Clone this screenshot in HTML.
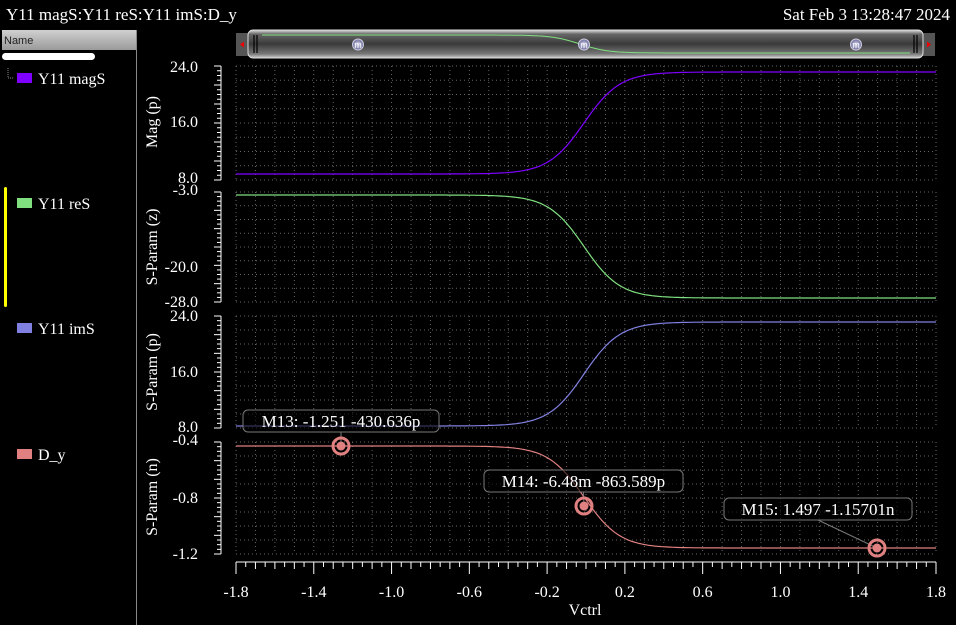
<!DOCTYPE html>
<html><head><meta charset="utf-8"><style>
html,body{margin:0;padding:0;background:#000;width:956px;height:625px;overflow:hidden;font-family:"Liberation Serif",serif;color:#fff}
svg text{font-family:"Liberation Serif",serif}
</style></head><body>
<svg id="s" width="956" height="625" xmlns="http://www.w3.org/2000/svg">
<defs>
<linearGradient id="hd" x1="0" y1="0" x2="0" y2="1"><stop offset="0" stop-color="#d0d0d0"/><stop offset="1" stop-color="#9a9a9a"/></linearGradient>
<linearGradient id="sb" x1="0" y1="0" x2="0" y2="1"><stop offset="0" stop-color="#ddd"/><stop offset="0.15" stop-color="#666"/><stop offset="0.5" stop-color="#3a3a3a"/><stop offset="0.85" stop-color="#777"/><stop offset="1" stop-color="#ccc"/></linearGradient>
<radialGradient id="mk"><stop offset="0" stop-color="#dde"/><stop offset="1" stop-color="#669"/></radialGradient>
</defs>
<text x="6" y="20" font-size="17" fill="#fff">Y11 magS:Y11 reS:Y11 imS:D_y</text>
<text x="950" y="20" font-size="17" fill="#fff" text-anchor="end">Sat Feb 3 13:28:47 2024</text>
<rect x="2" y="30" width="134" height="20" fill="url(#hd)"/>
<text x="4" y="44" font-size="11" fill="#222" style="font-family:'Liberation Sans',sans-serif">Name</text>
<line x1="136.5" y1="30" x2="136.5" y2="625" stroke="#888"/>
<rect x="2" y="53" width="93" height="7" rx="3.5" fill="#fff"/>
<path d="M8 68V78H14" stroke="#888" stroke-dasharray="1 1" fill="none"/>
<rect x="17" y="73" width="15" height="10" fill="#7f00ff"/>
<text x="38" y="84" font-size="16" fill="#fff">Y11 magS</text>
<rect x="4" y="187" width="3" height="120" fill="#ff0" rx="1.5"/>
<rect x="17" y="198" width="15" height="10" fill="#80e080"/>
<text x="38" y="209" font-size="16" fill="#fff">Y11 reS</text>
<rect x="17" y="323" width="15" height="10" fill="#8080e0"/>
<text x="38" y="334" font-size="16" fill="#fff">Y11 imS</text>
<rect x="17" y="449" width="15" height="10" fill="#e08080"/>
<text x="38" y="460" font-size="16" fill="#fff">D_y</text>
<rect x="236" y="33" width="14" height="23" fill="#555"/>
<path d="M240 44.5l4-3v6z" fill="#e00"/>
<rect x="921" y="33" width="14" height="23" fill="#555"/>
<path d="M931 44.5l-4-3v6z" fill="#e00"/>
<rect x="248" y="30" width="675" height="28" rx="5" fill="url(#sb)" stroke="#ddd"/>
<path d="M254 35v18M257 35v18M914 35v18M917 35v18" stroke="#000" stroke-width="1.2"/>
<path id="mini" fill="none" stroke="#80e080" stroke-width="1"/>
<g id="g"></g>
<g font-size="16" fill="#fff" text-anchor="end">
<text x="198" y="72">24.0</text><text x="198" y="127">16.0</text><text x="198" y="183">8.0</text>
<text x="198" y="195">-3.0</text><text x="198" y="272">-20.0</text><text x="198" y="307">-28.0</text>
<text x="198" y="321">24.0</text><text x="198" y="377">16.0</text><text x="198" y="432">8.0</text>
<text x="198" y="445">-0.4</text><text x="198" y="503">-0.8</text><text x="198" y="559">-1.2</text>
</g>
<g font-size="16" fill="#fff" text-anchor="middle">
<text transform="translate(157,122) rotate(-90)">Mag (p)</text>
<text transform="translate(157,247) rotate(-90)">S-Param (z)</text>
<text transform="translate(157,372) rotate(-90)">S-Param (p)</text>
<text transform="translate(157,497) rotate(-90)">S-Param (n)</text>
<text x="585" y="615">Vctrl</text>
</g>
</svg>
<script>
var s=document.getElementById('g'),h='';
var X0=236,X1=936;function xv(v){return X0+(v+1.8)/3.6*(X1-X0);}
var P=[[66,180],[192,302],[316,428],[442,554]];
P.forEach(function(p){
 for(var i=0;i<=36;i++){var x=xv(-1.8+i*0.1);h+='<line x1="'+x+'" y1="'+p[0]+'" x2="'+x+'" y2="'+p[1]+'" stroke="#666" stroke-dasharray="1 3"/>';}
 for(var y=p[0];y<=p[1]+0.5;y+=(p[1]-p[0])/8){h+='<line x1="'+X0+'" y1="'+y+'" x2="'+X1+'" y2="'+y+'" stroke="#666" stroke-dasharray="1 3"/>';}
 h+='<line x1="221" y1="'+p[0]+'" x2="221" y2="'+p[1]+'" stroke="#fff"/>';
 for(var k=0;k<=24;k++){var y=p[0]+k*(p[1]-p[0])/24;h+='<line x1="'+(k%4==0?214:217)+'" y1="'+y+'" x2="221" y2="'+y+'" stroke="#fff"/>';}
});
h+='<line x1="'+X0+'" y1="562" x2="'+X1+'" y2="562" stroke="#fff"/>';
for(var i=0;i<=72;i++){var x=xv(-1.8+i*0.05);var L=i%8==0?12:(i%2==0?7:5);h+='<line x1="'+x+'" y1="562" x2="'+x+'" y2="'+(562+L)+'" stroke="#fff"/>';}
var lab=['-1.8','-1.4','-1.0','-0.6','-0.2','0.2','0.6','1.0','1.4','1.8'];
lab.forEach(function(t,i){h+='<text x="'+xv(-1.8+i*0.4)+'" y="597" font-size="16" fill="#fff" text-anchor="middle">'+t+'</text>';});
function sig(x){var t=(x-584)/18;return 1/(1+Math.exp(-t));}
function curve(a,b,c){var d='';for(var x=X0;x<=X1;x+=2){var y=a+(b-a)*sig(x);d+=(d?'L':'M')+x+' '+y.toFixed(1);}return '<path d="'+d+'" fill="none" stroke="'+c+'" stroke-width="1.2"/>';}
h+=curve(174,72,'#7f00ff');h+=curve(195,298,'#80e080');h+=curve(426,322,'#8080e0');h+=curve(446,548,'#e08080');
var m=[[341,446,243,410,196,'M13: -1.251 -430.636p'],[584,506,484,470,199,'M14: -6.48m -863.589p'],[877,548,724,498,188,'M15: 1.497 -1.15701n']];
m.forEach(function(q){
 h+='<line x1="'+(q[2]+q[4]/2)+'" y1="'+(q[3]+22)+'" x2="'+q[0]+'" y2="'+q[1]+'" stroke="#777"/>';
 h+='<rect x="'+q[2]+'" y="'+q[3]+'" width="'+q[4]+'" height="22" rx="5" fill="rgba(0,0,0,0.6)" stroke="#777"/>';
 h+='<text x="'+(q[2]+q[4]/2)+'" y="'+(q[3]+17)+'" font-size="17" fill="#fff" text-anchor="middle">'+q[5]+'</text>';
 h+='<circle cx="'+q[0]+'" cy="'+q[1]+'" r="8" fill="none" stroke="#e08080" stroke-width="3"/><circle cx="'+q[0]+'" cy="'+q[1]+'" r="4.5" fill="#e08080"/>';
});
s.innerHTML=h;
var d='';for(var x=262;x<=910;x+=3){var t=(x-580)/14;var y=35+18/(1+Math.exp(-t));d+=(d?'L':'M')+x+' '+y.toFixed(1);}
document.getElementById('mini').setAttribute('d',d);
var sv=document.getElementById('s');
[358,584,856].forEach(function(x){sv.insertAdjacentHTML('beforeend','<circle cx="'+x+'" cy="44.5" r="5.5" fill="url(#mk)" stroke="#ccd"/><text x="'+x+'" y="48" font-size="9" fill="#fff" text-anchor="middle" style="font-family:Liberation Sans,sans-serif">m</text>');});
</script>
</body></html>
